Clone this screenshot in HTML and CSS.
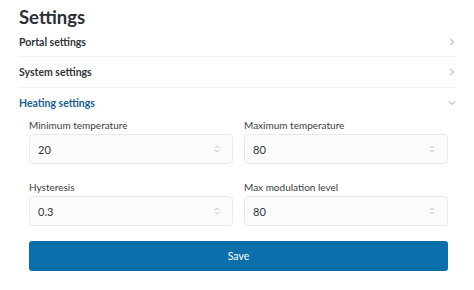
FILE: index.html
```html
<!DOCTYPE html>
<html>
<head>
<meta charset="utf-8">
<link rel="stylesheet" href="styles.css">
</head>
<body>
<div class="page">
  <h1 class="title">Settings</h1>
  <div class="section">
    <div class="summary first"><span>Portal settings</span>
      <svg class="chev" width="8" height="8" viewBox="0 0 8 8"><path d="M2.5 1 L5.5 4 L2.5 7" fill="none" stroke="#9aa0a6" stroke-width="1"/></svg>
    </div>
  </div>
  <div class="section">
    <div class="summary"><span>System settings</span>
      <svg class="chev" width="8" height="8" viewBox="0 0 8 8"><path d="M2.5 1 L5.5 4 L2.5 7" fill="none" stroke="#9aa0a6" stroke-width="1"/></svg>
    </div>
  </div>
  <div class="section open">
    <div class="summary active"><span>Heating settings</span>
      <svg class="chev" width="8" height="8" viewBox="0 0 8 8"><path d="M1 2.5 L4 5.5 L7 2.5" fill="none" stroke="#9aa0a6" stroke-width="1"/></svg>
    </div>
    <div class="body">
      <div class="grid">
        <label class="field"><span class="lbl">Minimum temperature</span>
          <span class="input"><span>20</span><svg class="spin" width="6" height="10" viewBox="0 0 6 10"><path d="M1 4 L3 2 L5 4 M1 6 L3 8 L5 6" fill="none" stroke="#c4c8cc" stroke-width="1"/></svg></span></label>
        <label class="field"><span class="lbl">Maximum temperature</span>
          <span class="input"><span>80</span><svg class="spin" width="6" height="10" viewBox="0 0 6 10"><path d="M1 4 L3 2 L5 4 M1 6 L3 8 L5 6" fill="none" stroke="#c4c8cc" stroke-width="1"/></svg></span></label>
        <label class="field"><span class="lbl">Hysteresis</span>
          <span class="input"><span>0.3</span><svg class="spin" width="6" height="10" viewBox="0 0 6 10"><path d="M1 4 L3 2 L5 4 M1 6 L3 8 L5 6" fill="none" stroke="#c4c8cc" stroke-width="1"/></svg></span></label>
        <label class="field"><span class="lbl">Max modulation level</span>
          <span class="input"><span>80</span><svg class="spin" width="6" height="10" viewBox="0 0 6 10"><path d="M1 4 L3 2 L5 4 M1 6 L3 8 L5 6" fill="none" stroke="#c4c8cc" stroke-width="1"/></svg></span></label>
      </div>
      <button class="save">Save</button>
    </div>
  </div>
</div>
</body>
</html>
```
FILE: styles.css
```css
* { box-sizing: border-box; }
body { margin: 0; background: #fff; font-family: "Lato", "Open Sans", sans-serif; color: #373c44; }
.page { padding: 4px 19px 0 19px; }
.title { margin: 0; font-size: 18.5px; line-height: 26px; font-weight: 700; color: #2b3035; }
.section { border-bottom: 1px solid #eef0f2; }
.section.open { border-bottom: none; }
.summary { display: flex; align-items: center; justify-content: space-between; height: 30px; font-size: 10.5px; font-weight: 700; color: #2f353b; }
.summary.first { height: 26px; padding-bottom: 2px; }
.summary.active { color: #175f8e; }
.chev { margin-right: -1px; }
.body { padding: 0 7px 0 10px; margin-top: -1px; }
.grid { display: grid; grid-template-columns: 1fr 1fr; column-gap: 11px; row-gap: 15px; }
.field { display: flex; flex-direction: column; gap: 1px; }
.lbl { font-size: 10px; line-height: 16px; color: #383d43; }
.input { display: flex; align-items: center; justify-content: space-between; height: 30px; border: 1px solid #e7e9ec; border-radius: 4px; background: #fbfbfc; padding: 0 12px 0 8px; font-size: 11px; color: #2f343a; }
.save { display: block; width: 100%; margin-top: 15px; height: 30px; border: none; border-radius: 3px; background: #0b6fab; color: #fff; font-family: "Lato", "Open Sans", sans-serif; font-size: 10.5px; }
```
